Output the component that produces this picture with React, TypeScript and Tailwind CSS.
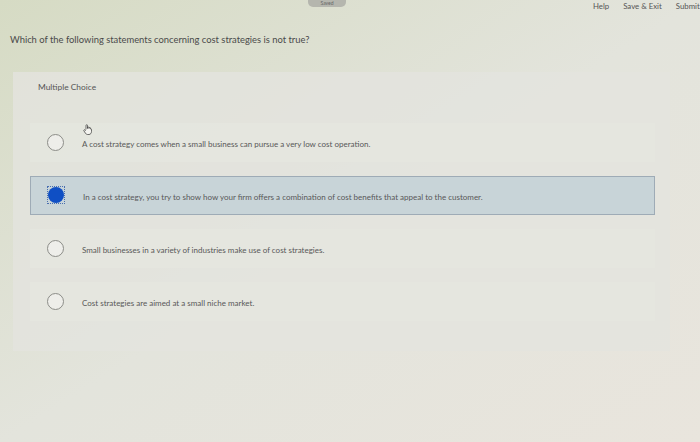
const OPTIONS = [
  { text: "A cost strategy comes when a small business can pursue a very low cost operation.", selected: false, cursor: true },
  { text: "In a cost strategy, you try to show how your firm offers a combination of cost benefits that appeal to the customer.", selected: true, cursor: false },
  { text: "Small businesses in a variety of industries make use of cost strategies.", selected: false, cursor: false },
  { text: "Cost strategies are aimed at a small niche market.", selected: false, cursor: false },
];

function HandCursor() {
  return (
    <svg width="9" height="11" viewBox="0 0 18 22" className="absolute left-[1px] top-[-14px]">
      <path
        d="M6 11V3a1.5 1.5 0 0 1 3 0v6 -1.5a1.5 1.5 0 0 1 3 0V9v-.5a1.5 1.5 0 0 1 3 0V10a1.5 1.5 0 0 1 2 1.5V15c0 3-2 6-5 6H9c-2 0-3-1-4-2.5L2 14a1.5 1.5 0 0 1 2.3-2L6 13.5"
        fill="#f4f4f0"
        stroke="#333"
        strokeWidth="1.4"
        strokeLinejoin="round"
      />
    </svg>
  );
}

function Option({ text, selected, cursor }: { text: string; selected: boolean; cursor: boolean }) {
  return (
    <div
      className={`flex items-center h-[39px] pl-[16px] pr-3 border ${
        selected ? "bg-[#c8d4d8] border-[#9eabb6]" : "bg-[#e6e7e0]/70 border-transparent"
      }`}
    >
      {selected ? (
        <div className="w-[18px] h-[18px] flex items-center justify-center border border-dotted border-[#4a6fb0]">
          <div className="w-[16px] h-[16px] rounded-full bg-[#0f4fc4]" />
        </div>
      ) : (
        <div className="w-[17px] h-[17px] rounded-full border border-[#8c8d88] bg-[#eeeeea]" />
      )}
      <div className="relative ml-[18px] text-[8px] text-[#585858] mt-[4px]">
        {cursor && <HandCursor />}
        {text}
      </div>
    </div>
  );
}

export default function App() {
  return (
    <div className="w-[700px] h-[442px] overflow-hidden bg-linear-to-br from-[#d6dbc4] via-[#e3e4dc] to-[#e9e5dd] font-['Lato',sans-serif] text-[#444]">
      {/* top bar */}
      <div className="relative h-[12px]">
        <div className="absolute left-[308px] top-[-4px] w-[38px] h-[11px] rounded-[5px] bg-[#b5b6ae] text-[5px] text-[#666] text-center leading-[14px]">
          Saved
        </div>
        <div className="absolute left-[593px] top-[1px] flex gap-[14px] text-[7.8px] text-[#555] whitespace-nowrap">
          <span>Help</span>
          <span>Save &amp; Exit</span>
          <span>Submit</span>
        </div>
      </div>

      <p className="ml-[10px] mt-[21px] text-[9.4px] text-[#4a4a4a]">
        Which of the following statements concerning cost strategies is not true?
      </p>

      <div className="ml-[13px] mt-[25px] w-[657px] h-[279px] bg-[#e3e4de]/80 pt-[9px] pl-[17px] pr-[15px]">
        <p className="ml-[8px] text-[8.4px] text-[#555]">Multiple Choice</p>
        <div className="mt-[29px] flex flex-col gap-[14px]">
          {OPTIONS.map((o) => (
            <Option key={o.text} {...o} />
          ))}
        </div>
      </div>
    </div>
  );
}
